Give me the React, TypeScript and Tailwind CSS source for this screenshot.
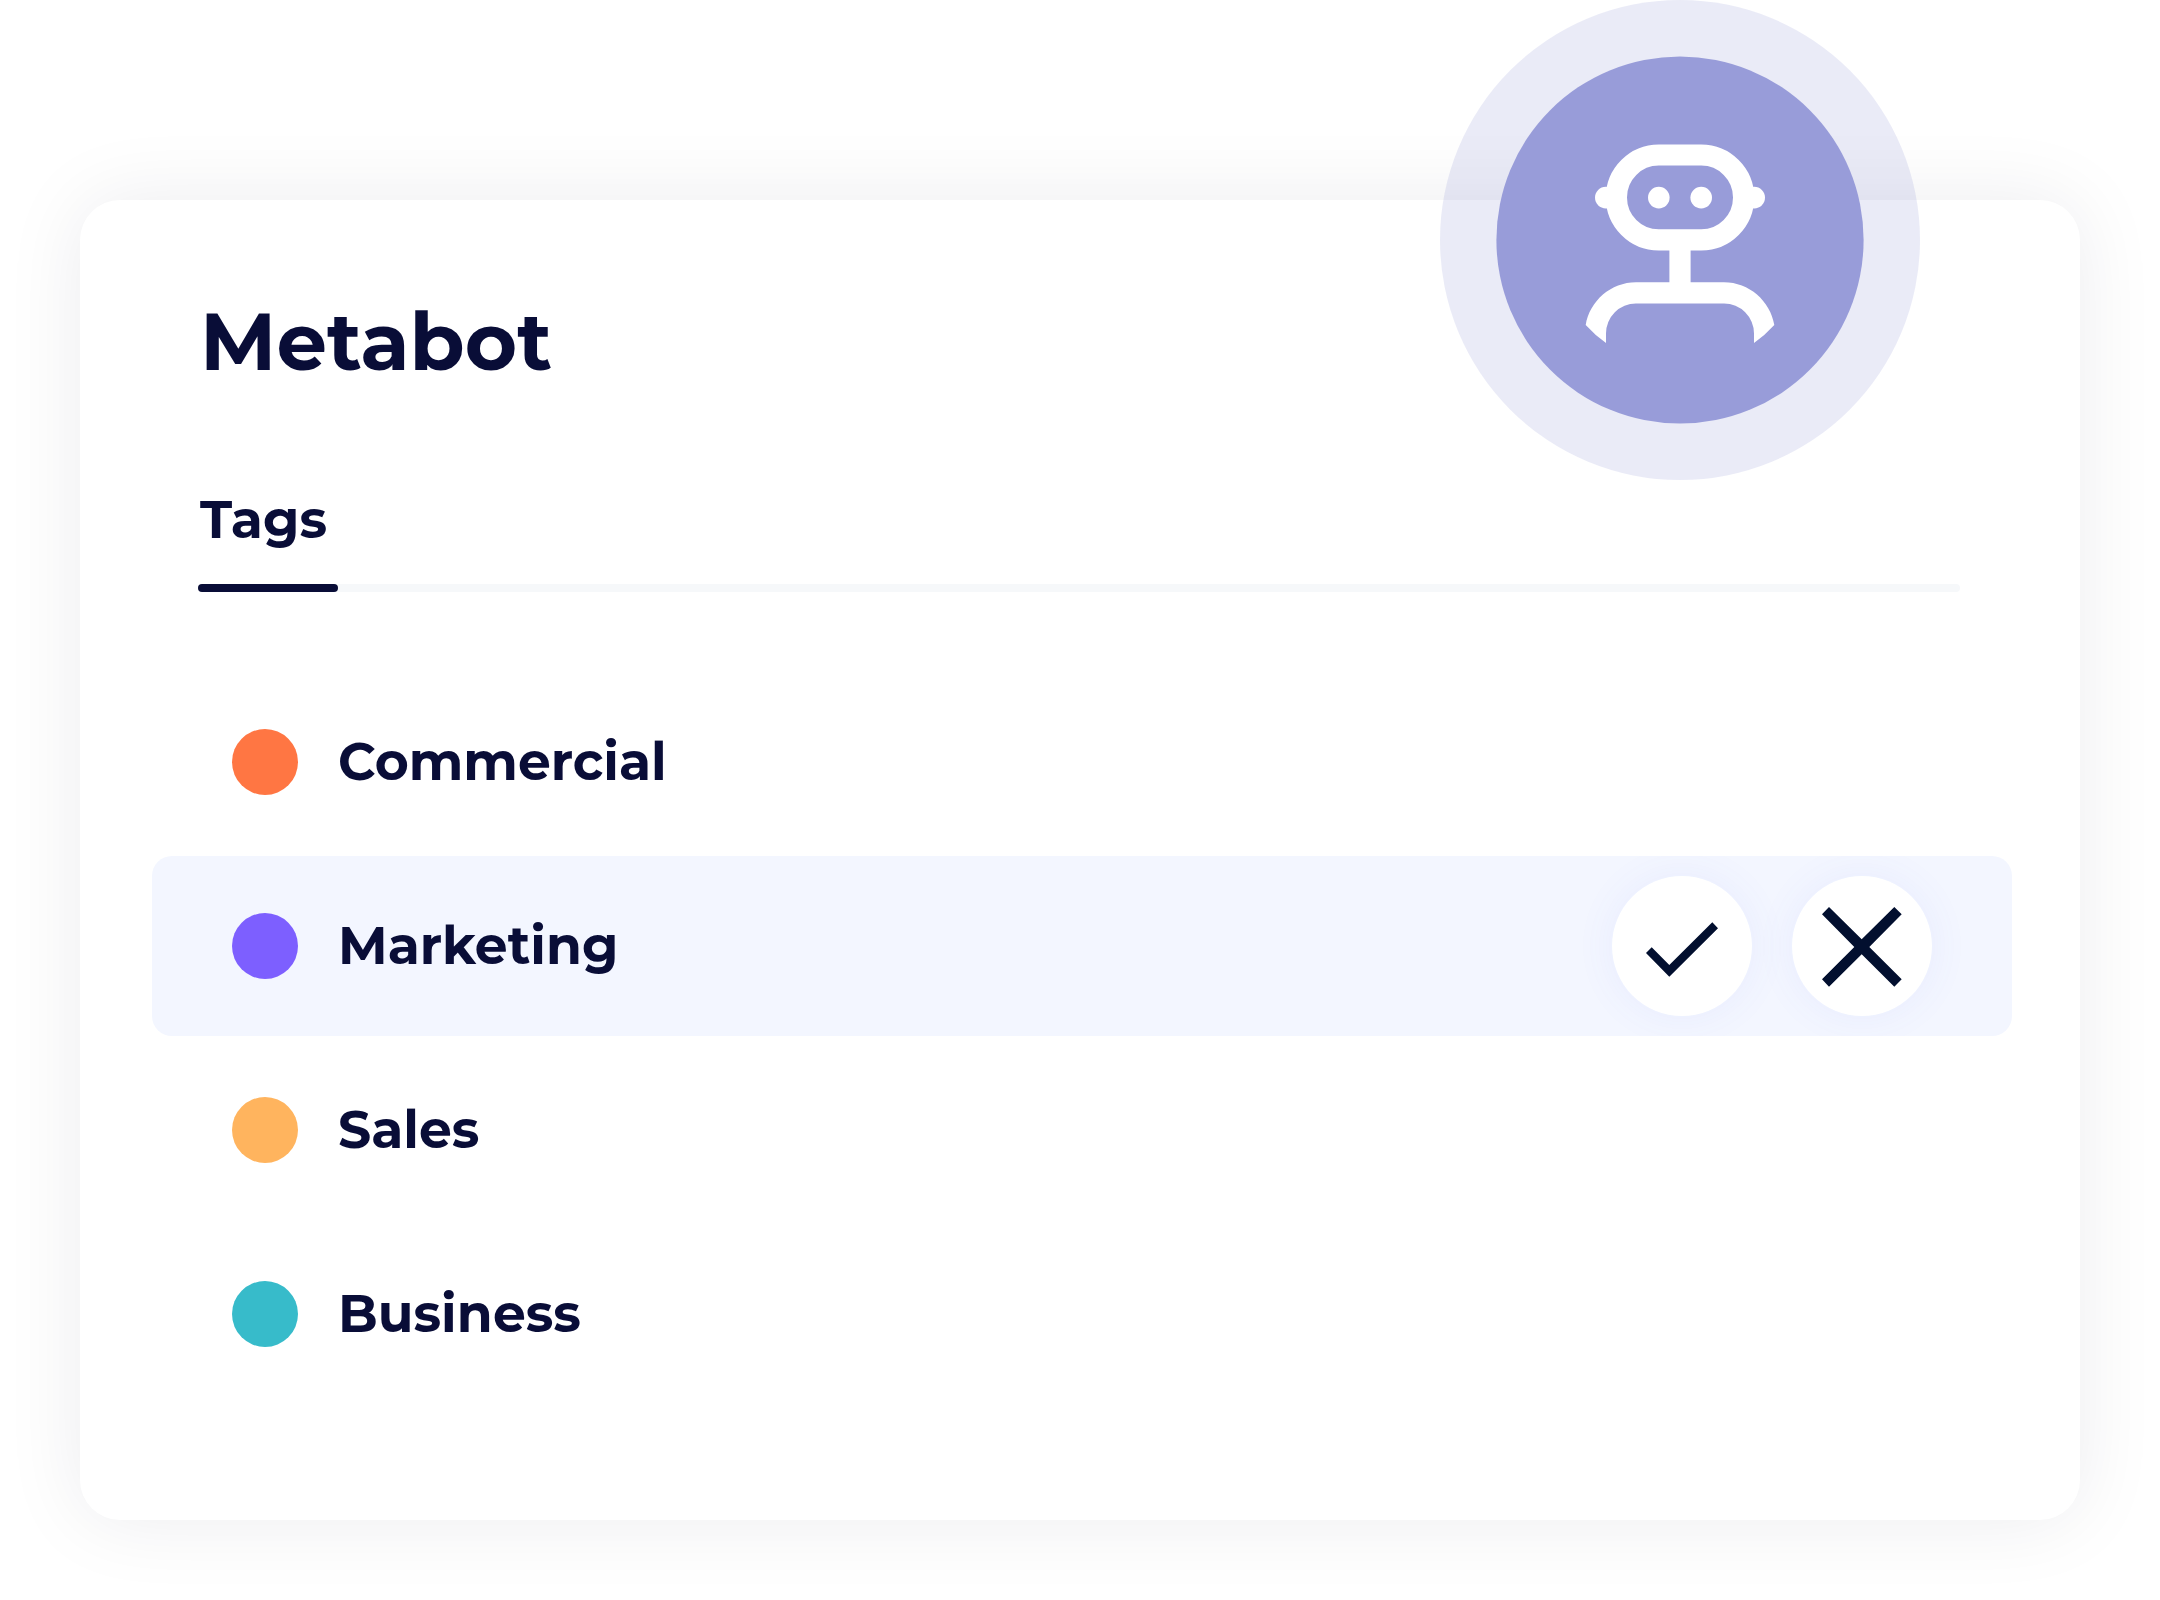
import { useState } from 'react';
import { clsx } from 'clsx';

interface Tag {
  name: string;
  dot: string;
}

const tags: Tag[] = [
  { name: 'Commercial', dot: 'bg-[#ff7643]' },
  { name: 'Marketing', dot: 'bg-[#7d5fff]' },
  { name: 'Sales', dot: 'bg-[#ffb45e]' },
  { name: 'Business', dot: 'bg-[#37bbca]' },
];

function CheckIcon() {
  return (
    <svg viewBox="0 0 140 140" className="size-full" fill="#020f2f" aria-hidden="true">
      <path d="M34 77l5.7-5.7L57.3 89l43-42.7 5.7 6-48.7 48.4z" />
    </svg>
  );
}

function CrossIcon() {
  return (
    <svg viewBox="0 0 140 140" className="size-full" fill="#020f2f" aria-hidden="true">
      <path d="M37 31l32.7 32.3L102.3 31l7.4 7.3L77.3 71l32.4 32.3-7.4 7.4-32.6-32.4L37 110.7l-7-7.4L62.3 71 30 38.3z" />
    </svg>
  );
}

function BotAvatar() {
  return (
    <svg viewBox="0 0 480 480" className="size-[480px]" role="img" aria-label="Metabot avatar">
      <circle cx="240" cy="240" r="240" fill="#989cd9" fillOpacity="0.2" />
      <circle cx="240" cy="240" r="183.6" fill="#989cd9" />
      {/* Head */}
      <rect x="176.4" y="155" width="127.2" height="84.8" rx="42.4" fill="none" stroke="#fff" strokeWidth="21.2" />
      <g fill="#fff">
        <circle cx="165.8" cy="197.6" r="10.8" />
        <circle cx="314.2" cy="197.6" r="10.8" />
        <circle cx="218.8" cy="197.6" r="10.8" />
        <circle cx="261.2" cy="197.6" r="10.8" />
        {/* Neck and shoulders */}
        <rect x="229.4" y="245" width="21.2" height="45" />
        <path d="M196 282.3H284C309 282.3 330.3 301 334.3 325Q325 335.3 314 343V333.5A30 30 0 0 0 284 303.6H196A30 30 0 0 0 166 333.5V343Q155 335.3 145.7 325C149.7 301 171 282.3 196 282.3z" />
      </g>
    </svg>
  );
}

const actionClass =
  'size-[140px] rounded-full bg-white shadow-[0_0_40px_rgba(80,105,240,0.07)] cursor-pointer';

export default function App() {
  const [selected, setSelected] = useState('Marketing');

  return (
    <main
      className="min-h-screen overflow-hidden bg-white px-20 pt-[200px] pb-20 text-[#090d37]"
      style={{ fontFamily: 'Montserrat, Inter, sans-serif' }}
    >
      <section className="relative rounded-[40px] bg-white pt-[94px] pr-[68px] pb-[116px] pl-[72px] shadow-[0_0_80px_rgba(9,18,50,0.08)]">
        <div className="absolute -top-[200px] right-[160px]">
          <BotAvatar />
        </div>

        <header className="pl-12">
          <h1 className="text-[80px] leading-[96px] font-bold">Metabot</h1>
        </header>

        <div role="tablist" className="mt-[98px] mr-[52px] ml-[46px]">
          <button role="tab" aria-selected="true" className="block pl-0.5 text-[52px] leading-[64px] font-bold">
            Tags
          </button>
          <div className="mt-8 h-2 rounded-full bg-[#f6f8fa]">
            <div className="h-2 w-[140px] rounded-full bg-[#090d37]" />
          </div>
        </div>

        <ul className="mt-20 flex flex-col gap-1">
          {tags.map((tag) => (
            <li
              key={tag.name}
              onClick={() => setSelected(tag.name)}
              className={clsx(
                'flex h-[180px] items-center overflow-hidden rounded-[20px] px-20',
                tag.name === selected && 'bg-[#f3f6ff]'
              )}
            >
              <span className={clsx('size-[66px] rounded-full', tag.dot)} />
              <span className="ml-10 text-[52px] leading-[64px] font-bold">{tag.name}</span>
              {tag.name === selected && (
                <div className="ml-auto flex gap-10">
                  <button aria-label="Accept tag" className={actionClass}>
                    <CheckIcon />
                  </button>
                  <button aria-label="Reject tag" className={actionClass}>
                    <CrossIcon />
                  </button>
                </div>
              )}
            </li>
          ))}
        </ul>
      </section>
    </main>
  );
}
